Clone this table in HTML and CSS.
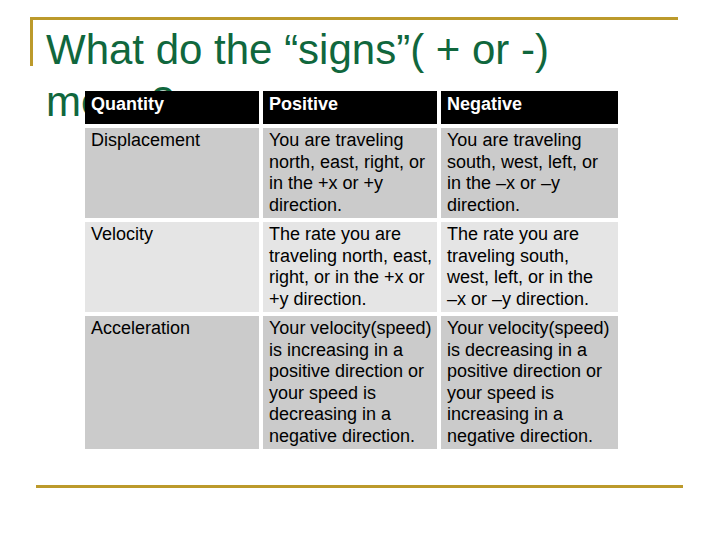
FILE: index.html
```html
<!DOCTYPE html>
<html>
<head>
<meta charset="utf-8">
<link rel="stylesheet" href="styles.css">
</head>
<body>
<div class="slide">
  <div class="stage">
    <div class="frame"></div>
    <h1 class="title">What do the “signs”( + or -)<br>mean?</h1>
    <table class="grid">
      <colgroup>
        <col class="c1"><col class="c2"><col class="c3">
      </colgroup>
      <thead>
        <tr><th>Quantity</th><th>Positive</th><th>Negative</th></tr>
      </thead>
      <tbody>
        <tr class="dark">
          <td>Displacement</td>
          <td>You are traveling<br>north, east, right, or<br>in the +x or +y<br>direction.</td>
          <td>You are traveling<br>south, west, left, or<br>in the –x or –y<br>direction.</td>
        </tr>
        <tr class="light">
          <td>Velocity</td>
          <td>The rate you are<br>traveling north, east,<br>right, or in the +x or<br>+y direction.</td>
          <td>The rate you are<br>traveling south,<br>west, left, or in the<br>–x or –y direction.</td>
        </tr>
        <tr class="dark">
          <td>Acceleration</td>
          <td>Your velocity(speed)<br>is increasing in a<br>positive direction or<br>your speed is<br>decreasing in a<br>negative direction.</td>
          <td>Your velocity(speed)<br>is decreasing in a<br>positive direction or<br>your speed is<br>increasing in a<br>negative direction.</td>
        </tr>
      </tbody>
    </table>
  </div>
  <div class="bottom-line"></div>
</div>
</body>
</html>
```
FILE: styles.css
```css
html, body {
  margin: 0;
  padding: 0;
  background: #ffffff;
}

.slide {
  width: 720px;
  height: 540px;
  position: relative;
  overflow: hidden;
  font-family: "Liberation Sans", Arial, sans-serif;
}

.stage {
  display: grid;
  align-items: start;
  justify-items: start;
}

.stage > * {
  grid-area: 1 / 1;
}

.frame {
  margin: 17px 0 0 30px;
  width: 648px;
  height: 49px;
  box-sizing: border-box;
  border-top: 3px solid #BC9A2B;
  border-left: 3px solid #BC9A2B;
}

.title {
  margin: 24px 0 0 46px;
  font-size: 42px;
  line-height: 52px;
  font-weight: normal;
  color: #10673D;
  white-space: nowrap;
}

.grid {
  margin: 87px 0 0 81px;
  border-collapse: separate;
  border-spacing: 4px;
  font-size: 18px;
  line-height: 21.5px;
  color: #000;
  table-layout: fixed;
}

.c1 { width: 174px; }
.c2 { width: 174px; }
.c3 { width: 177px; }

.grid th {
  background: #000;
  color: #fff;
  font-weight: bold;
  text-align: left;
  vertical-align: top;
  padding: 3px 4px 8.5px 6px;
  white-space: nowrap;
}

.grid td {
  vertical-align: top;
  padding: 2px 4px 2px 6px;
  white-space: nowrap;
}

.dark td { background: #CBCBCB; }
.light td { background: #E5E5E5; }

.bottom-line {
  position: absolute;
  left: 36px;
  top: 485px;
  width: 647px;
  height: 3px;
  background: #BC9A2B;
}
```
